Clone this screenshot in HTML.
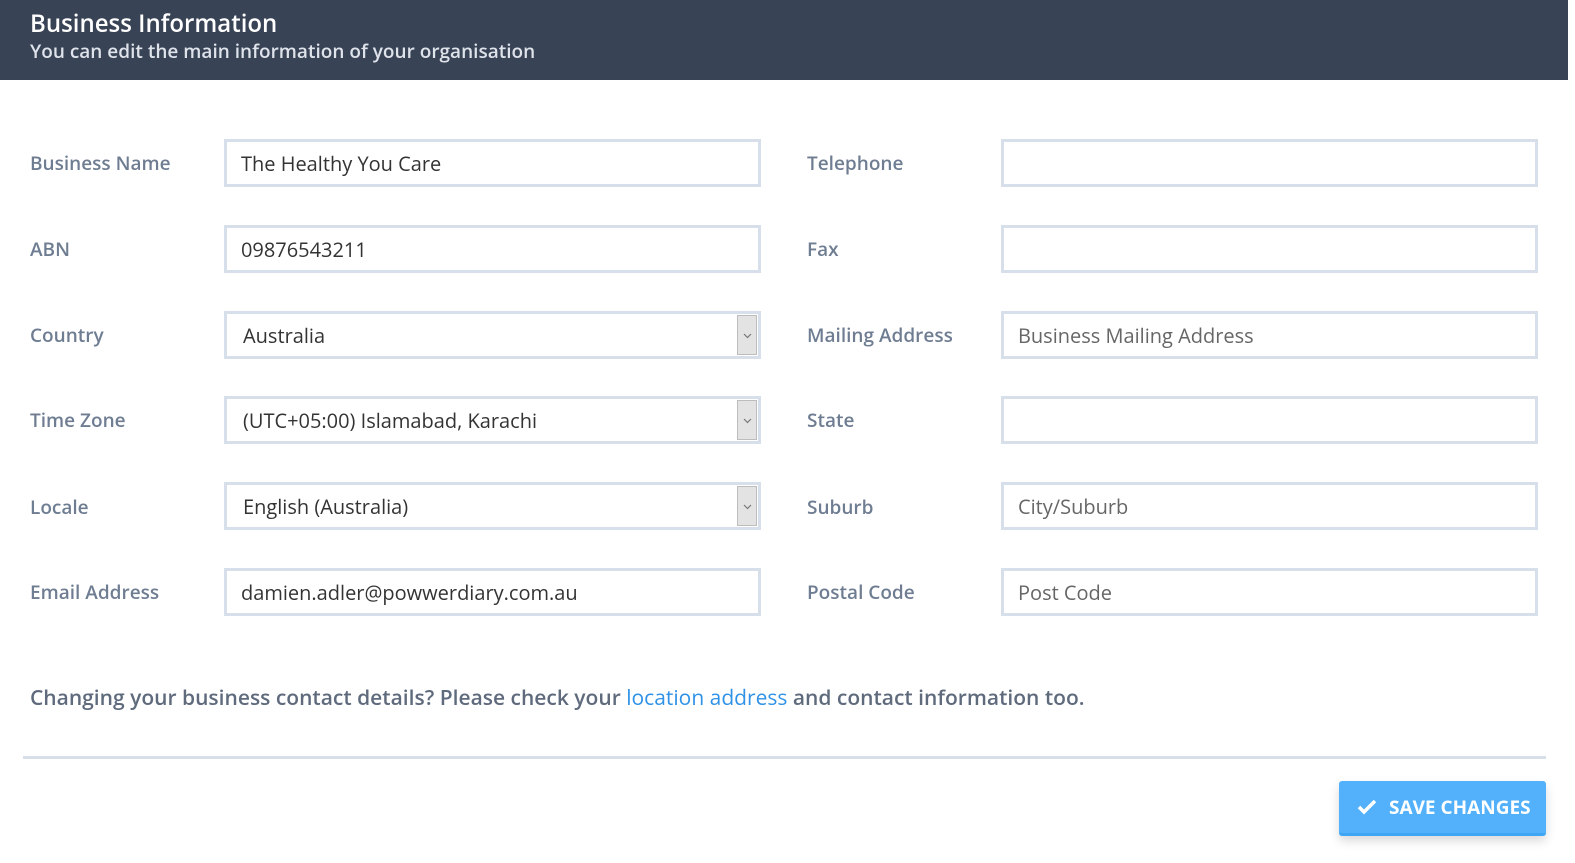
<!DOCTYPE html>
<html><head><meta charset="utf-8"><style>
*{box-sizing:border-box;margin:0;padding:0}
body{width:1575px;height:863px;background:#fff;font-family:"Open Sans","Liberation Sans",sans-serif;position:relative;overflow:hidden}
.hdr{position:absolute;left:0;top:0;width:1568px;height:80px;background:#394356;color:#fff;padding:9px 30px}
.hdr h1{font-size:24px;font-weight:600;line-height:30px}
.hdr p{font-size:19px;line-height:24px;color:#dfe3ea;font-weight:600}
.lbl{position:absolute;font-size:19px;font-weight:600;color:#6f7d92}
.in{position:absolute;width:537px;height:48px;border:3px solid #d6dfea;background:#fff;font-size:20px;color:#333;padding:0 14px;line-height:44px}
.ph{color:#666}
.sel .arr{position:absolute;right:1px;top:1px;width:20px;height:40px;background:#e3e3e3;border:1px solid #bdbdbd}
.sel .arr svg{position:absolute;left:5px;top:17px}
.note{position:absolute;left:30px;top:684px;font-size:21px;font-weight:600;color:#5f6b7d}
.note a{color:#2f92e6;text-decoration:none;font-weight:500}
.rule{position:absolute;left:23px;top:756px;width:1523px;height:3px;background:#d6dfea}
.btn{position:absolute;left:1339px;top:781px;width:207px;height:55px;background:#52b1fa;border-radius:3px;border-bottom:3px solid #3fa6f5;box-shadow:0 5px 10px rgba(0,0,0,.15);color:#fff;font-size:19px;font-weight:700;line-height:52px;padding-left:50px}
.btn svg{position:absolute;left:18px;top:18px}
</style></head><body>
<div class="hdr"><h1>Business Information</h1><p>You can edit the main information of your organisation</p></div>

<div class="lbl" style="left:30px;top:150px">Business Name</div>
<div class="in" style="left:224px;top:139px">The Healthy You Care</div>
<div class="lbl" style="left:30px;top:236px">ABN</div>
<div class="in" style="left:224px;top:225px">09876543211</div>
<div class="lbl" style="left:30px;top:322px">Country</div>
<div class="in sel" style="left:224px;top:311px;padding-left:16px">Australia<div class="arr"><svg width="9" height="6" viewBox="0 0 9 6"><path d="M1 1l3.5 3.5L8 1" stroke="#777" stroke-width="1.2" fill="none"/></svg></div></div>
<div class="lbl" style="left:30px;top:407px">Time Zone</div>
<div class="in sel" style="left:224px;top:396px;padding-left:16px">(UTC+05:00) Islamabad, Karachi<div class="arr"><svg width="9" height="6" viewBox="0 0 9 6"><path d="M1 1l3.5 3.5L8 1" stroke="#777" stroke-width="1.2" fill="none"/></svg></div></div>
<div class="lbl" style="left:30px;top:494px">Locale</div>
<div class="in sel" style="left:224px;top:482px;padding-left:16px">English (Australia)<div class="arr"><svg width="9" height="6" viewBox="0 0 9 6"><path d="M1 1l3.5 3.5L8 1" stroke="#777" stroke-width="1.2" fill="none"/></svg></div></div>
<div class="lbl" style="left:30px;top:579px">Email Address</div>
<div class="in" style="left:224px;top:568px">damien.adler@powwerdiary.com.au</div>

<div class="lbl" style="left:807px;top:150px">Telephone</div>
<div class="in" style="left:1001px;top:139px"></div>
<div class="lbl" style="left:807px;top:236px">Fax</div>
<div class="in" style="left:1001px;top:225px"></div>
<div class="lbl" style="left:807px;top:322px">Mailing Address</div>
<div class="in ph" style="left:1001px;top:311px">Business Mailing Address</div>
<div class="lbl" style="left:807px;top:407px">State</div>
<div class="in" style="left:1001px;top:396px"></div>
<div class="lbl" style="left:807px;top:494px">Suburb</div>
<div class="in ph" style="left:1001px;top:482px">City/Suburb</div>
<div class="lbl" style="left:807px;top:579px">Postal Code</div>
<div class="in ph" style="left:1001px;top:568px">Post Code</div>

<div class="note">Changing your business contact details? Please check your <a>location address</a> and contact information too.</div>
<div class="rule"></div>
<div class="btn"><svg width="20" height="16" viewBox="0 0 20 16"><path d="M2 8l5 5L18 2" stroke="#fff" stroke-width="3.5" fill="none"/></svg>SAVE CHANGES</div>
</body></html>
